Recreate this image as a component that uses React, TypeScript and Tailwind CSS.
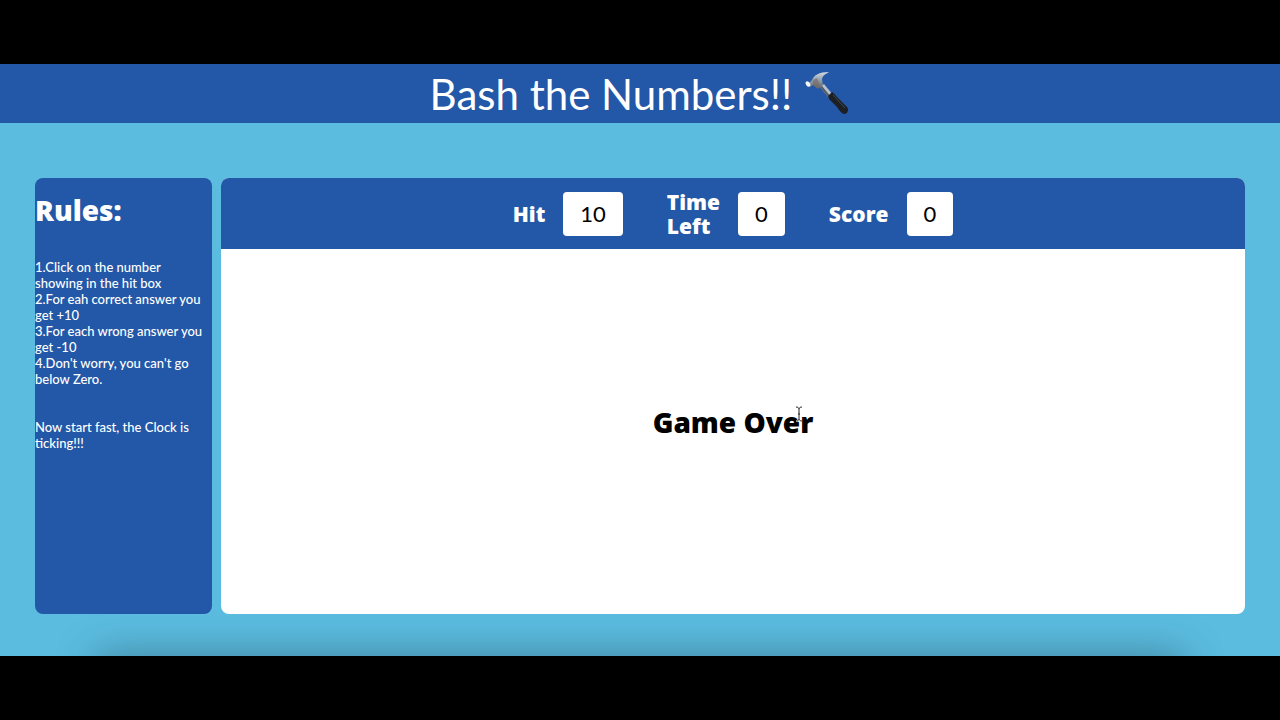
interface Stat {
  id: string;
  label: string;
  value: number;
}

const stats: Stat[] = [
  { id: "hit", label: "Hit", value: 10 },
  { id: "time", label: "Time Left", value: 0 },
  { id: "score", label: "Score", value: 0 },
];

const rules = [
  "1.Click on the number showing in the hit box",
  "2.For eah correct answer you get +10",
  "3.For each wrong answer you get -10",
  "4.Don't worry, you can't go below Zero.",
];

function Hammer() {
  return (
    <svg viewBox="0 0 46 44" className="h-11 w-[46px]" aria-hidden="true">
      <defs>
        <linearGradient id="steel" x1="0" y1="0" x2="0" y2="1">
          <stop offset="0" stopColor="#d4dbe2" />
          <stop offset="0.5" stopColor="#8f9ba8" />
          <stop offset="1" stopColor="#5c646f" />
        </linearGradient>
      </defs>
      <path d="M16 15 L20 12 L29 23 L25 26 Z" fill="#b8c1ca" />
      <path d="M16 15 L18 14 L27 25 L25 26 Z" fill="#565c66" />
      <path
        d="M4 12 L8 8 C10 3 15 0 25 0 C22 2 19 3 18 7 L19 13 L14 17 L9 13 L6 15 Z"
        fill="url(#steel)"
      />
      <path d="M9 8 L13 6 L16 14 L13 16 L9 13 Z" fill="#77685f" opacity="0.6" />
      <ellipse cx="4" cy="12" rx="2" ry="3" fill="#f2f6f9" transform="rotate(-35 4 12)" />
      <path
        d="M24 24 L28 20 C30 21 31 23 33 25 L43 35 C45 37 44 42 40 42 C37 41 35 38 33 35 L25 27 Z"
        fill="#1c1f24"
      />
      <path d="M29 23 L41 36" stroke="#454951" strokeWidth="1" />
    </svg>
  );
}

function TextCursor() {
  return (
    <svg
      viewBox="0 0 8 16"
      className="absolute top-2 right-2.5 h-4 w-2"
      fill="none"
      aria-hidden="true"
    >
      <path
        d="M1 1 C3 1 4 2 4 3 C4 2 5 1 7 1 M4 3 V13 M1 15 C3 15 4 14 4 13 C4 14 5 15 7 15 M3 8 H5"
        stroke="white"
        strokeWidth="2"
      />
      <path
        d="M1 1 C3 1 4 2 4 3 C4 2 5 1 7 1 M4 3 V13 M1 15 C3 15 4 14 4 13 C4 14 5 15 7 15 M3 8 H5"
        stroke="#222222"
        strokeWidth="1"
      />
    </svg>
  );
}

export default function App() {
  return (
    <div className="flex min-h-screen flex-col bg-black py-16 font-['Gill_Sans','Lato',sans-serif]">
      <header className="flex h-[59px] items-center justify-center gap-3 bg-[#2357a7] text-white">
        <h1 className="text-[42px] leading-[56px]">Bash the Numbers!!</h1>
        <Hammer />
      </header>

      <main className="relative flex flex-1 gap-[9px] overflow-hidden bg-[#5bbce0] px-[35px] pt-[55px] pb-[42px]">
        <aside className="w-[177px] shrink-0 rounded-lg bg-[#2357a7] pt-4 pr-1 text-white">
          <h2 className="font-['Gill_Sans','Open_Sans',sans-serif] text-[28px] leading-8 font-extrabold">
            Rules:
          </h2>
          <ol className="mt-[33px] text-[13px] leading-4 font-medium">
            {rules.map((rule) => (
              <li key={rule}>{rule}</li>
            ))}
          </ol>
          <p className="mt-8 text-[13px] leading-4 font-medium">
            Now start fast, the Clock is ticking!!!
          </p>
        </aside>

        <section className="flex flex-1 flex-col overflow-hidden rounded-lg bg-white">
          <div className="flex h-[71px] items-center justify-center gap-11 bg-[#2357a7]">
            {stats.map((stat) => (
              <div key={stat.id} className="flex items-center gap-[18px]">
                <label
                  htmlFor={stat.id}
                  className="w-min font-['Gill_Sans','Open_Sans',sans-serif] text-[21px] leading-6 font-extrabold text-white"
                >
                  {stat.label}
                </label>
                <output
                  id={stat.id}
                  className="rounded bg-white px-[17px] py-2 text-[22px] leading-7 text-black"
                >
                  {stat.value}
                </output>
              </div>
            ))}
          </div>
          <div className="flex flex-1 items-center justify-center pb-5">
            <div className="relative py-2">
              <h2 className="font-['Gill_Sans','Open_Sans',sans-serif] text-[28px] leading-8 font-extrabold text-black">
                Game Over
              </h2>
              <TextCursor />
            </div>
          </div>
        </section>

        <div className="absolute inset-x-24 top-full h-8 shadow-[0_0_40px_rgba(0,0,0,0.35)]" />
      </main>
    </div>
  );
}
